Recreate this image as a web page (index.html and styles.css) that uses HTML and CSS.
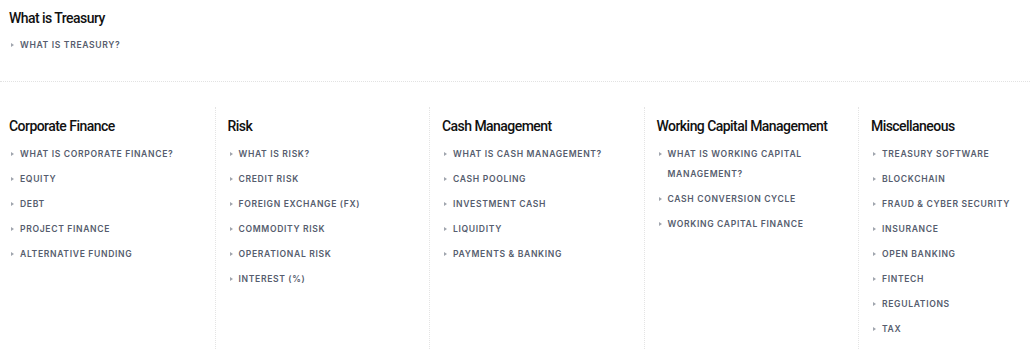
FILE: index.html
```html
<!DOCTYPE html>
<html lang="en">
  <head>
    <meta charset="UTF-8" />
    <meta name="viewport" content="width=device-width, initial-scale=1.0" />
    <title>Treasury menu</title>
    <link rel="stylesheet" href="styles.css">
  </head>
  <body>
    <section class="intro">
      <h2>What is Treasury</h2>
      <ul class="links">
        <li>What is Treasury?</li>
      </ul>
    </section>

    <div class="columns">
      <div class="col">
        <h2>Corporate Finance</h2>
        <ul class="links">
          <li>What is Corporate Finance?</li>
          <li>Equity</li>
          <li>Debt</li>
          <li>Project Finance</li>
          <li>Alternative Funding</li>
        </ul>
      </div>
      <div class="col">
        <h2>Risk</h2>
        <ul class="links">
          <li>What is Risk?</li>
          <li>Credit Risk</li>
          <li>Foreign Exchange (FX)</li>
          <li>Commodity Risk</li>
          <li>Operational Risk</li>
          <li>Interest (%)</li>
        </ul>
      </div>
      <div class="col">
        <h2>Cash Management</h2>
        <ul class="links">
          <li>What is Cash Management?</li>
          <li>Cash Pooling</li>
          <li>Investment Cash</li>
          <li>Liquidity</li>
          <li>Payments &amp; Banking</li>
        </ul>
      </div>
      <div class="col">
        <h2>Working Capital Management</h2>
        <ul class="links">
          <li>What is Working Capital Management?</li>
          <li>Cash Conversion Cycle</li>
          <li>Working Capital Finance</li>
        </ul>
      </div>
      <div class="col">
        <h2>Miscellaneous</h2>
        <ul class="links">
          <li>Treasury Software</li>
          <li>Blockchain</li>
          <li>Fraud &amp; Cyber Security</li>
          <li>Insurance</li>
          <li>Open Banking</li>
          <li>Fintech</li>
          <li>Regulations</li>
          <li>Tax</li>
        </ul>
      </div>
    </div>
  </body>
</html>
```

FILE: styles.css
```css
body {
  margin: 0;
  background: #fff;
  font-family: Roboto, "Liberation Sans", sans-serif;
  width: 1030px;
  height: 350px;
  overflow: hidden;
}
h2 {
  margin: 0;
  font-size: 14px;
  font-weight: 500;
  letter-spacing: -0.55px;
  color: #111;
  line-height: 18px;
}
.intro {
  padding: 9px 9px 0;
  height: 72px;
  border-bottom: 1px dotted #e2e2e2;
}
.links {
  list-style: none;
  margin: 0;
  padding: 0;
}
.links li {
  position: relative;
  padding-left: 11px;
  font-family: "Inter", "Noto Sans", sans-serif;
  font-size: 8.6px;
  font-weight: 600;
  text-transform: uppercase;
  letter-spacing: 0.65px;
  color: #565d6e;
  line-height: 20px;
  margin-bottom: 5px;
}
.links li::before {
  content: "";
  position: absolute;
  left: 2px;
  top: 8px;
  border-left: 3px solid #a0a5ae;
  border-top: 2px solid transparent;
  border-bottom: 2px solid transparent;
}
.intro h2 {
  margin-bottom: 8px;
}
.columns {
  display: grid;
  grid-template-columns: repeat(5, 214.5px);
  margin-top: 25px;
}
.col {
  padding: 10px 10px 0 12px;
  height: 236px;
  border-left: 1px dotted #e4e4e4;
}
.col:first-child {
  border-left: none;
  padding-left: 9px;
}
.col h2 {
  margin-bottom: 9px;
}
```
